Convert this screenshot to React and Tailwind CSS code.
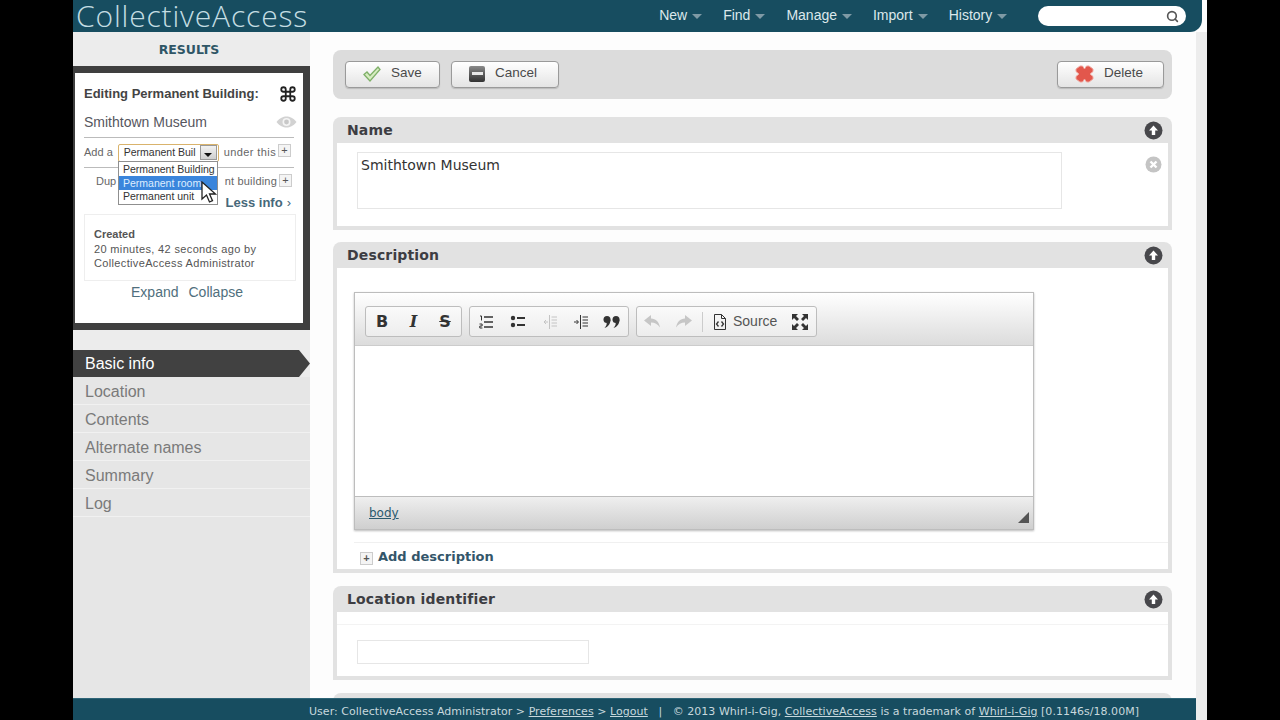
import { Command, Search } from 'lucide-react';

const NAV_ITEMS = ['New', 'Find', 'Manage', 'Import', 'History'];
const SIDE_ITEMS = ['Location', 'Contents', 'Alternate names', 'Summary', 'Log'];

function Caret() {
  return <span className="ml-[5px] mt-[2px] h-0 w-0 border-x-[5px] border-t-[5px] border-x-transparent border-t-[#7f9aa5]" />;
}

function SmallPlus() {
  return (
    <span className="flex h-[13px] w-[13px] items-center justify-center border border-[#ccc] bg-[#f4f4f4] font-['Liberation_Sans',sans-serif] text-[11px] leading-none text-[#555]">
      +
    </span>
  );
}

function RoundIcon({ kind }) {
  if (kind === 'up') {
    return (
      <svg width="19" height="19" viewBox="0 0 19 19">
        <circle cx="9.5" cy="9.5" r="9" fill="#47474b" />
        <path d="M9.5 4.5 14 9.5h-2.8V14H7.8V9.5H5z" fill="#fff" />
      </svg>
    );
  }
  return (
    <svg width="17" height="17" viewBox="0 0 17 17">
      <circle cx="8.5" cy="8.5" r="8" fill="#c4c4c4" />
      <path d="m5.5 5.5 6 6m0-6-6 6" stroke="#fff" strokeWidth="2.4" />
    </svg>
  );
}

function ActionButton({ icon, label, width }) {
  return (
    <button className={`flex h-[27px] ${width} items-center rounded-[4px] border border-[#9a9a9a] bg-linear-to-b from-white to-[#e4e4e4] pb-[2px] pl-[17px] font-['Liberation_Sans',sans-serif] text-[13.5px] text-[#4a4a4a] shadow-[0_1px_1px_#bbb]`}>
      {icon}
      <span className="ml-[10px]">{label}</span>
    </button>
  );
}

function SectionHeader({ title }) {
  return (
    <div className="flex h-[26px] items-center justify-between rounded-t-lg bg-[#e2e2e2] pl-[14px] pr-[9px]">
      <span className="font-['DejaVu_Sans',sans-serif] text-[14px] font-bold tracking-[0.15px] text-[#3d3d42]">{title}</span>
      <RoundIcon kind="up" />
    </div>
  );
}

function ToolGroup({ width, children }) {
  return (
    <div className={`flex h-[31px] ${width} items-center rounded-[3px] border border-[#bdbdbd] bg-linear-to-b from-[#fafafa] to-[#ededed]`}>
      {children}
    </div>
  );
}

function LinesIcon({ kind, muted }) {
  const c = muted ? '#c4c4c4' : '#333';
  return (
    <svg width="16" height="16" viewBox="0 0 16 16" fill="none" stroke={c}>
      {kind === 'ol' && (
        <>
          <path d="M6 3h9M6 8h9M6 13h9" strokeWidth="1.6" />
          <path d="M2 2h1.5v4.5M1.5 10h2.6v2H1.8v2h2.6" strokeWidth="1" />
        </>
      )}
      {kind === 'ul' && (
        <>
          <path d="M7 4h8M7 11h8" strokeWidth="1.8" />
          <circle cx="3" cy="4" r="2.2" fill={c} stroke="none" />
          <circle cx="3" cy="11" r="2.2" fill={c} stroke="none" />
        </>
      )}
      {kind === 'out' && (
        <>
          <path d="M7.5 1v14" />
          <path d="M9.5 3H15M9.5 6H15M9.5 9H15M9.5 12H15" />
          <path d="M6 8H2m2-2-2 2 2 2" />
        </>
      )}
      {kind === 'in' && (
        <>
          <path d="M7.5 1v14" />
          <path d="M9.5 3H15M9.5 6H15M9.5 9H15M9.5 12H15" />
          <path d="M1 8h4M3.5 6l2 2-2 2" />
        </>
      )}
    </svg>
  );
}

function QuoteIcon() {
  return (
    <svg width="18" height="14" viewBox="0 0 18 14" fill="#333">
      <circle cx="4" cy="4.5" r="3.5" />
      <path d="M7.5 4.5C7.5 9 5 12 1.5 13c1.5-1.5 2.2-3 2.2-5z" />
      <circle cx="13" cy="4.5" r="3.5" />
      <path d="M16.5 4.5c0 4.5-2.5 7.500-6 8.500 1.500-1.500 2.200-3 2.200-5z" />
    </svg>
  );
}

function ReplyIcon({ flip }) {
  return (
    <svg width="17" height="13" viewBox="0 0 17 13" fill="#c6c6c6" className={flip ? '-scale-x-100' : ''}>
      <path d="M7 0 0 5.500 7 11V7.500c4 0 6.500 1.500 9 5C15 7 12 3.800 7 3.500z" />
    </svg>
  );
}

function SourceIcon() {
  return (
    <svg width="14" height="16" viewBox="0 0 14 16" fill="none" stroke="#333">
      <path d="M1.500.5h7l4 4v11h-11z" />
      <path d="M8.500.5v4h4" />
      <path d="M5.500 7.500 3.500 10l2 2.500M8.500 7.500l2 2.500-2 2.500" strokeWidth="1.300" />
    </svg>
  );
}

function FullscreenIcon() {
  return (
    <svg width="16" height="16" viewBox="0 0 16 16" fill="#333">
      <path d="M0 0h6L4 2l3 3-2 2-3-3-2 2zM16 0v6l-2-2-3 3-2-2 3-3-2-2zM0 16v-6l2 2 3-3 2 2-3 3 2 2zM16 16h-6l2-2-3-3 2-2 3 3 2-2z" />
    </svg>
  );
}

function EyeIcon() {
  return (
    <svg width="21" height="12" viewBox="0 0 21 12">
      <path d="M.5 6C4 1.800 7 .5 10.500.5S17 1.800 20.500 6C17 10.200 14 11.500 10.500 11.500S4 10.200.5 6z" fill="#d2d2d2" />
      <circle cx="10.500" cy="6" r="4" fill="#f4f4f4" />
      <circle cx="10.500" cy="6" r="2.400" fill="#c8c8c8" />
    </svg>
  );
}

function Sidebar() {
  return (
    <aside className="flex w-[237px] shrink-0 flex-col bg-[#ececec] font-['Liberation_Sans',sans-serif]">
      <div className="flex h-[34px] items-center justify-center pr-[5px] pt-[3px] font-['DejaVu_Sans',sans-serif] text-[12.500px] font-bold text-[#2f5666]">
        RESULTS
      </div>
      <div className="h-[264px] border-b-[7px] border-l-2 border-r-[7px] border-t-[7px] border-[#3f3f3f] bg-white px-[9px]">
        <div className="-mr-[3px] flex h-[30px] items-center justify-between pt-[11px]">
          <span className="text-[13px] font-bold text-[#444]">Editing Permanent Building:</span>
          <Command size={18} strokeWidth={2.4} className="text-[#222]" />
        </div>
        <div className="flex h-[35px] items-center justify-between border-b border-[#bbb] pt-[4px] text-[14px] text-[#56565e]">
          <span>Smithtown Museum</span>
          <span className="-mr-[3px]"><EyeIcon /></span>
        </div>
        <div className="relative flex h-[30px] items-center border-b border-[#bbb] text-[11px] text-[#666]">
          <span>Add a</span>
          <div className="ml-[5px] flex h-[18px] w-[101px] items-center rounded-[2px] border border-[#d9b36c] bg-white pl-[5px] text-[10.5px] text-[#333]">
            <span className="w-[76px]">Permanent Buil</span>
            <span className="flex h-[15px] w-[17px] items-end justify-center border border-[#999] bg-linear-to-b from-[#f2f2f2] to-[#cfcfcf] pb-[2px]">
              <span className="h-0 w-0 border-x-[4px] border-t-[4px] border-x-transparent border-t-[#111]" />
            </span>
          </div>
          <span className="ml-[5px] text-[11px] tracking-[0.4px]">under this</span>
          <span className="ml-[2px] -mt-[4px]"><SmallPlus /></span>
          <div className="absolute left-[34px] top-[23px] z-10 w-[100px] border border-[#8f8f8f] bg-white text-[10.5px] text-[#333]">
            <div className="h-[14px] pl-[4px] leading-[14px]">Permanent Building</div>
            <div className="h-[14px] bg-[#3a85dc] pl-[4px] leading-[14px] text-[#dfeeff]">Permanent room</div>
            <div className="h-[14px] pl-[4px] leading-[13px]">Permanent unit</div>
          </div>
          <svg className="absolute left-[117px] top-[43px] z-20" width="17" height="24" viewBox="0 0 17 24">
            <path d="M1 1v17l4.500-4 3 7 3-1.300-3-6.700h6z" fill="#fff" stroke="#222" strokeWidth="1.300" />
          </svg>
        </div>
        <div className="flex h-[27px] items-center pr-[2px] text-[11px] text-[#666]">
          <span className="ml-[12px]">Dup</span>
          <span className="ml-auto tracking-[0.2px]">nt building</span>
          <span className="ml-[2px] -mt-[3px]"><SmallPlus /></span>
        </div>
        <div className="flex h-[15px] items-center justify-end pr-[3px] text-[13px] font-bold text-[#47687a]">
          Less info <span className="ml-[4px] font-normal">›</span>
        </div>
        <div className="mt-[4px] h-[67px] w-[212px] border border-[#eee] px-[9px] pt-[12px] text-[11px] leading-[14.500px] tracking-[0.35px] text-[#555]">
          <div className="font-bold tracking-normal">Created</div>
          <div>20 minutes, 42 seconds ago by</div>
          <div>CollectiveAccess Administrator</div>
        </div>
        <div className="mt-[1px] flex h-[20px] items-center justify-center gap-[10px] pr-[4px] text-[14px] text-[#506f7d]">
          <span>Expand</span>
          <span>Collapse</span>
        </div>
      </div>
      <div className="mt-[20px] flex h-[27px] items-center bg-[#414141] pl-[12px] pt-[1px] text-[16px] text-white [clip-path:polygon(0_0,226px_0,237px_50%,226px_100%,0_100%)]">
        Basic info
      </div>
      {SIDE_ITEMS.map((item) => (
        <div key={item} className="flex h-[28px] items-center border-b border-[#f1f1f1] bg-[#e6e6e6] pl-[12px] pt-[3px] text-[16px] text-[#7a7a7a]">
          {item}
        </div>
      ))}
      <div className="flex-1 bg-[#e6e6e6]" />
    </aside>
  );
}

function NameSection() {
  return (
    <section className="mt-[18px]">
      <SectionHeader title="Name" />
      <div className="relative h-[87px] border-x-4 border-b-4 border-[#e2e2e2] bg-white pl-[20px] pt-[9px]">
        <div className="h-[57px] w-[705px] border border-[#e6e6e6] px-[3px] py-[2px] font-['DejaVu_Sans',sans-serif] text-[14px] text-[#333]">
          Smithtown Museum
        </div>
        <span className="absolute left-[808px] top-[13px]"><RoundIcon kind="x" /></span>
      </div>
    </section>
  );
}

function DescriptionSection() {
  return (
    <section className="mt-[12px]">
      <SectionHeader title="Description" />
      <div className="h-[305px] border-x-4 border-b-4 border-[#e2e2e2] bg-white pl-[17px] pt-[24px]">
        <div className="h-[238px] w-[680px] border border-[#bdbdbd] shadow-[0_1px_2px_#bbb]">
          <div className="flex h-[53px] items-start gap-[7px] border-b border-[#ccc] bg-linear-to-b from-white to-[#dcdcdc] pl-[10px] pt-[13px]">
            <ToolGroup width="w-[97px]">
              <span className="w-[32px] text-center font-['DejaVu_Sans',sans-serif] text-[16px] font-bold text-[#333]">B</span>
              <span className="w-[31px] text-center font-['DejaVu_Serif',serif] text-[16px] font-bold italic text-[#333]">I</span>
              <span className="w-[32px] text-center font-['DejaVu_Sans',sans-serif] text-[16px] font-bold text-[#333] line-through">S</span>
            </ToolGroup>
            <ToolGroup width="w-[160px]">
              <span className="flex w-[32px] justify-center"><LinesIcon kind="ol" /></span>
              <span className="flex w-[32px] justify-center"><LinesIcon kind="ul" /></span>
              <span className="flex w-[31px] justify-center"><LinesIcon kind="out" muted /></span>
              <span className="flex w-[31px] justify-center"><LinesIcon kind="in" /></span>
              <span className="flex w-[32px] justify-center"><QuoteIcon /></span>
            </ToolGroup>
            <ToolGroup width="w-[181px]">
              <span className="flex w-[31px] justify-center"><ReplyIcon /></span>
              <span className="flex w-[31px] justify-center"><ReplyIcon flip /></span>
              <span className="ml-[3px] h-[20px] border-l border-[#ccc]" />
              <span className="ml-[10px]"><SourceIcon /></span>
              <span className="ml-[6px] font-['Liberation_Sans',sans-serif] text-[14px] text-[#555]">Source</span>
              <span className="ml-[15px]"><FullscreenIcon /></span>
            </ToolGroup>
          </div>
          <div className="h-[150px] bg-white" />
          <div className="flex h-[33px] items-center justify-between border-t border-[#bdbdbd] bg-linear-to-b from-[#efefef] to-[#cfcfcf] pl-[14px] pr-[4px]">
            <span className="font-['DejaVu_Sans',sans-serif] text-[12px] text-[#2b5a6e] underline">body</span>
            <span className="mt-[8px] h-0 w-0 border-b-[11px] border-l-[11px] border-b-[#555] border-l-transparent" />
          </div>
        </div>
        <div className="mt-[12px] flex h-[29px] items-center gap-[5px] border-t border-[#f0f0f0] pl-[6px] font-['DejaVu_Sans',sans-serif] text-[13px] font-bold text-[#33566a]">
          <span className="mt-[2px]"><SmallPlus /></span>
          Add description
        </div>
      </div>
    </section>
  );
}

function LocationSection() {
  return (
    <section className="mt-[13px]">
      <SectionHeader title="Location identifier" />
      <div className="h-[68px] border-x-4 border-b-4 border-[#e2e2e2] bg-white pt-[12px]">
        <div className="h-[16px] border-t border-[#f3f3f3]" />
        <div className="ml-[20px] h-[24px] w-[232px] border border-[#e6e6e6]" />
      </div>
    </section>
  );
}

export default function App() {
  return (
    <div className="flex h-[720px] w-[1280px] overflow-hidden bg-black">
      <div className="relative ml-[73px] flex h-full w-[1134px] flex-col bg-[#fdfdfd]">
        <header className="z-10 flex h-[32px] w-[1129px] shrink-0 items-center rounded-br-xl bg-[#174d60] pl-[3px]">
          <span className="font-['Open_Sans',sans-serif] text-[30px] font-light leading-[32px] tracking-[0.85px] text-[#c4dde3]">CollectiveAccess</span>
          <nav className="ml-[351px] flex items-center gap-[21px] pb-[2px] font-['Liberation_Sans',sans-serif] text-[14px] text-[#dce8ec]">
            {NAV_ITEMS.map((item) => (
              <span key={item} className="flex items-center">
                {item}
                <Caret />
              </span>
            ))}
          </nav>
          <div className="ml-[31px] flex h-[20px] w-[148px] items-center justify-end rounded-full bg-white pr-[7px]">
            <Search size={13} strokeWidth={3} className="text-[#555]" />
          </div>
        </header>
        <div className="flex min-h-0 flex-1">
          <Sidebar />
          <main className="ml-[23px] w-[839px] overflow-hidden pt-[18px]">
            <div className="flex h-[49px] items-center justify-between rounded-lg bg-[#dcdcdc] pl-[12px] pr-[8px]">
              <div className="flex gap-[11px]">
                <ActionButton
                  label="Save"
                  width="w-[95px]"
                  icon={
                    <svg width="18" height="16" viewBox="0 0 18 16">
                      <path d="M1 8.500 4 6l3 3.500L15 1l2 2.500L7 15z" fill="#d6ecc0" stroke="#7fb069" strokeWidth="1.300" />
                    </svg>
                  }
                />
                <ActionButton
                  label="Cancel"
                  width="w-[108px]"
                  icon={
                    <span className="flex h-[16px] w-[16px] items-center justify-center rounded-[2px] bg-linear-to-b from-[#8a8a8a] to-[#333]">
                      <span className="h-[3px] w-[11px] bg-[#e8e8e8]" />
                    </span>
                  }
                />
              </div>
              <ActionButton
                label="Delete"
                width="w-[107px]"
                icon={
                  <svg width="19" height="18" viewBox="0 0 19 18">
                    <path d="M5 1h2.500l2 3 2-3H14l4 3v2.500L15 9l3 2.500V14l-4 3h-2.500l-2-3-2 3H5l-4-3v-2.500L4 9 1 6.500V4z" fill="#e2574c" stroke="#f0a79f" />
                  </svg>
                }
              />
            </div>
            <NameSection />
            <DescriptionSection />
            <LocationSection />
            <div className="mt-[13px] h-[30px] rounded-t-lg bg-[#e2e2e2]" />
          </main>
          <div className="ml-[24px] w-[11px] bg-[#ededed]" />
        </div>
        <footer className="absolute bottom-0 left-0 z-10 flex h-[22px] w-[1123px] items-center justify-end whitespace-pre border-t border-[#2f6577] bg-[#174d60] pr-[57px] pt-[6px] font-['DejaVu_Sans',sans-serif] text-[11px] tracking-[0.03px] text-[#c7d8dd]">
          User: CollectiveAccess Administrator &gt; <span className="underline">Preferences</span> &gt; <span className="underline">Logout</span>   |   © 2013 Whirl-i-Gig, <span className="underline">CollectiveAccess</span> is a trademark of <span className="underline">Whirl-i-Gig</span> [0.1146s/18.00M]
        </footer>
      </div>
    </div>
  );
}
